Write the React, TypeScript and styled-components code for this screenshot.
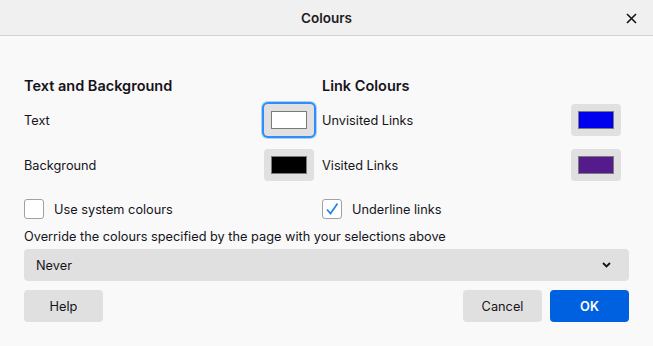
import React from "react";
import styled, { createGlobalStyle } from "styled-components";

const Global = createGlobalStyle`
  html, body { margin: 0; padding: 0; background: #f9f9f9; }
  body { font-family: Inter, "Liberation Sans", Arial, sans-serif; color: #15141a; }
  * { box-sizing: border-box; }
`;

const Dialog = styled.div`
  width: 653px;
  height: 346px;
  background: #f9f9f9;
  display: flex;
  flex-direction: column;
`;

const Header = styled.div`
  height: 36px;
  flex: none;
  background: #f0f0f0;
  border-bottom: 1px solid #d4d4d6;
  display: flex;
  align-items: center;
  justify-content: center;
  position: relative;
`;

const Title = styled.div`
  font-size: 13.5px;
  font-weight: 600;
  color: #1c1b22;
`;

const CloseButton = styled.button`
  position: absolute;
  right: 10px;
  top: 6px;
  width: 24px;
  height: 24px;
  padding: 0;
  border: none;
  background: transparent;
  display: flex;
  align-items: center;
  justify-content: center;
`;

const Body = styled.div`
  padding: 40px 24px 0 24px;
  display: flex;
  flex-direction: column;
`;

const Columns = styled.div`
  display: grid;
  grid-template-columns: 290px 299px;
  column-gap: 8px;
`;

const Column = styled.div`
  display: flex;
  flex-direction: column;
`;

const Heading = styled.div`
  font-size: 14.5px;
  font-weight: 600;
  line-height: 20px;
  height: 20px;
  margin-bottom: 8px;
`;

const Row = styled.div<{ $gap?: number }>`
  display: flex;
  align-items: center;
  justify-content: space-between;
  height: 32px;
  margin-bottom: ${(p) => p.$gap ?? 13}px;
  font-size: 12.75px;
`;

const SwatchButton = styled.button<{ $focused?: boolean }>`
  width: 50px;
  height: 32px;
  border: none;
  border-radius: 4px;
  background: #e0e0e0;
  padding: 0;
  display: flex;
  align-items: center;
  justify-content: center;
  box-shadow: ${(p) =>
    p.$focused ? "0 0 0 2px #2f8ff5, 0 0 0 3px rgba(120,180,250,0.6)" : "none"};
`;

const Swatch = styled.span<{ $color: string }>`
  width: 36px;
  height: 18px;
  background: ${(p) => p.$color};
  border: 1px solid #7a7a7a;
`;

const CheckRow = styled.label`
  display: flex;
  align-items: center;
  gap: 10px;
  height: 20px;
  font-size: 12.75px;
  margin-top: 5px;
`;

const Box = styled.span`
  width: 20px;
  height: 20px;
  border: 1px solid #a0a0a8;
  border-radius: 3px;
  background: #ffffff;
  display: flex;
  align-items: center;
  justify-content: center;
`;

const Caption = styled.div`
  font-size: 12.75px;
  line-height: 16px;
  margin-top: 10px;
`;

const Select = styled.div`
  margin-top: 4px;
  height: 32px;
  background: #e0e0e0;
  border-radius: 4px;
  display: flex;
  align-items: center;
  justify-content: space-between;
  padding: 0 18px 0 12px;
  font-size: 12.75px;
`;

const Footer = styled.div`
  margin-top: 9px;
  display: flex;
  align-items: center;
  gap: 8px;
`;

const Spacer = styled.div`
  flex: 1;
`;

const Button = styled.button<{ $primary?: boolean }>`
  width: 79px;
  height: 32px;
  border: none;
  border-radius: 4px;
  font-family: inherit;
  font-size: 12.75px;
  font-weight: ${(p) => (p.$primary ? 600 : 400)};
  background: ${(p) => (p.$primary ? "#0061e0" : "#e0e0e0")};
  color: ${(p) => (p.$primary ? "#ffffff" : "#15141a")};
  padding: 0;
`;

export default function App() {
  return (
    <>
      <Global />
      <Dialog>
        <Header>
          <Title>Colours</Title>
          <CloseButton aria-label="Close">
            <svg width="11" height="11" viewBox="0 0 11 11">
              <path d="M1 1 L10 10 M10 1 L1 10" stroke="#15141a" strokeWidth="1.6" />
            </svg>
          </CloseButton>
        </Header>
        <Body>
          <Columns>
            <Column>
              <Heading>Text and Background</Heading>
              <Row>
                <span>Text</span>
                <SwatchButton $focused>
                  <Swatch $color="#ffffff" />
                </SwatchButton>
              </Row>
              <Row $gap={13}>
                <span>Background</span>
                <SwatchButton>
                  <Swatch $color="#000000" />
                </SwatchButton>
              </Row>
              <CheckRow>
                <Box />
                <span>Use system colours</span>
              </CheckRow>
            </Column>
            <Column>
              <Heading>Link Colours</Heading>
              <Row>
                <span>Unvisited Links</span>
                <SwatchButton>
                  <Swatch $color="#0000ee" />
                </SwatchButton>
              </Row>
              <Row $gap={13}>
                <span>Visited Links</span>
                <SwatchButton>
                  <Swatch $color="#551a8b" />
                </SwatchButton>
              </Row>
              <CheckRow>
                <Box>
                  <svg width="16" height="16" viewBox="0 0 16 16">
                    <path
                      d="M3 8.5 L6.5 12.5 L13.5 2.5"
                      fill="none"
                      stroke="#1f87e8"
                      strokeWidth="1.7"
                    />
                  </svg>
                </Box>
                <span>Underline links</span>
              </CheckRow>
            </Column>
          </Columns>
          <Caption>Override the colours specified by the page with your selections above</Caption>
          <Select>
            <span>Never</span>
            <svg width="9" height="6" viewBox="0 0 9 6">
              <path d="M1 1 L4.5 4.5 L8 1" fill="none" stroke="#15141a" strokeWidth="1.8" />
            </svg>
          </Select>
          <Footer>
            <Button>Help</Button>
            <Spacer />
            <Button>Cancel</Button>
            <Button $primary>OK</Button>
          </Footer>
        </Body>
      </Dialog>
    </>
  );
}
